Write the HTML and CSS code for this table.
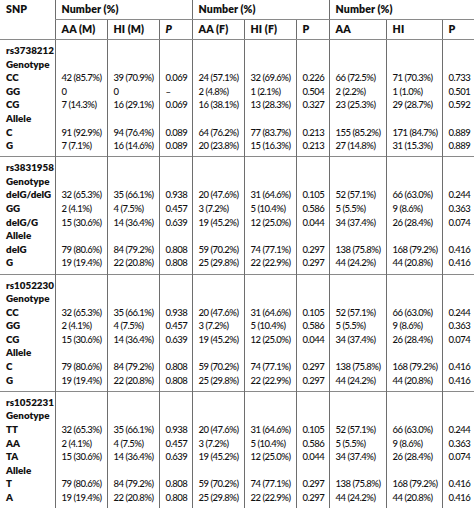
FILE: index.html
```html
<!DOCTYPE html>
<html>
<head>
<meta charset="utf-8">
<link rel="stylesheet" href="styles.css">
</head>
<body>
<table class="snp-table">
  <colgroup>
    <col class="c-snp"><col class="c-52"><col class="c-52"><col class="c-p"><col class="c-52"><col class="c-52"><col class="c-p"><col class="c-57"><col class="c-56"><col class="c-p2">
  </colgroup>
  <thead>
    <tr class="h1">
      <th rowspan="2" class="snp">SNP</th>
      <th colspan="3" class="grp">Number (%)</th>
      <th colspan="3" class="grp">Number (%)</th>
      <th colspan="3" class="grp">Number (%)</th>
    </tr>
    <tr class="h2">
      <th>AA (M)</th><th>HI (M)</th><th><i>P</i></th>
      <th>AA (F)</th><th>HI (F)</th><th>P</th>
      <th>AA</th><th>HI</th><th>P</th>
    </tr>
  </thead>
  <tbody class="sec">
    <tr class="first"><td class="lbl">rs3738212</td><td></td><td></td><td></td><td></td><td></td><td></td><td></td><td></td><td></td></tr>
    <tr><td class="lbl">Genotype</td><td></td><td></td><td></td><td></td><td></td><td></td><td></td><td></td><td></td></tr>
    <tr><td class="lbl">CC</td><td>42 (85.7%)</td><td>39 (70.9%)</td><td>0.069</td><td>24 (57.1%)</td><td>32 (69.6%)</td><td>0.226</td><td>66 (72.5%)</td><td>71 (70.3%)</td><td>0.733</td></tr>
    <tr><td class="lbl">GG</td><td>0</td><td>0</td><td>–</td><td>2 (4.8%)</td><td>1 (2.1%)</td><td>0.504</td><td>2 (2.2%)</td><td>1 (1.0%)</td><td>0.501</td></tr>
    <tr><td class="lbl">CG</td><td>7 (14.3%)</td><td>16 (29.1%)</td><td>0.069</td><td>16 (38.1%)</td><td>13 (28.3%)</td><td>0.327</td><td>23 (25.3%)</td><td>29 (28.7%)</td><td>0.592</td></tr>
    <tr><td class="lbl">Allele</td><td></td><td></td><td></td><td></td><td></td><td></td><td></td><td></td><td></td></tr>
    <tr><td class="lbl">C</td><td>91 (92.9%)</td><td>94 (76.4%)</td><td>0.089</td><td>64 (76.2%)</td><td>77 (83.7%)</td><td>0.213</td><td>155 (85.2%)</td><td>171 (84.7%)</td><td>0.889</td></tr>
    <tr class="last"><td class="lbl">G</td><td>7 (7.1%)</td><td>16 (14.6%)</td><td>0.089</td><td>20 (23.8%)</td><td>15 (16.3%)</td><td>0.213</td><td>27 (14.8%)</td><td>31 (15.3%)</td><td>0.889</td></tr>
  </tbody>
  <tbody class="sec">
    <tr class="first"><td class="lbl">rs3831958</td><td></td><td></td><td></td><td></td><td></td><td></td><td></td><td></td><td></td></tr>
    <tr><td class="lbl">Genotype</td><td></td><td></td><td></td><td></td><td></td><td></td><td></td><td></td><td></td></tr>
    <tr><td class="lbl">delG/delG</td><td>32 (65.3%)</td><td>35 (66.1%)</td><td>0.938</td><td>20 (47.6%)</td><td>31 (64.6%)</td><td>0.105</td><td>52 (57.1%)</td><td>66 (63.0%)</td><td>0.244</td></tr>
    <tr><td class="lbl">GG</td><td>2 (4.1%)</td><td>4 (7.5%)</td><td>0.457</td><td>3 (7.2%)</td><td>5 (10.4%)</td><td>0.586</td><td>5 (5.5%)</td><td>9 (8.6%)</td><td>0.363</td></tr>
    <tr><td class="lbl">delG/G</td><td>15 (30.6%)</td><td>14 (36.4%)</td><td>0.639</td><td>19 (45.2%)</td><td>12 (25.0%)</td><td>0.044</td><td>34 (37.4%)</td><td>26 (28.4%)</td><td>0.074</td></tr>
    <tr><td class="lbl">Allele</td><td></td><td></td><td></td><td></td><td></td><td></td><td></td><td></td><td></td></tr>
    <tr><td class="lbl">delG</td><td>79 (80.6%)</td><td>84 (79.2%)</td><td>0.808</td><td>59 (70.2%)</td><td>74 (77.1%)</td><td>0.297</td><td>138 (75.8%)</td><td>168 (79.2%)</td><td>0.416</td></tr>
    <tr class="last"><td class="lbl">G</td><td>19 (19.4%)</td><td>22 (20.8%)</td><td>0.808</td><td>25 (29.8%)</td><td>22 (22.9%)</td><td>0.297</td><td>44 (24.2%)</td><td>44 (20.8%)</td><td>0.416</td></tr>
  </tbody>
  <tbody class="sec">
    <tr class="first"><td class="lbl">rs1052230</td><td></td><td></td><td></td><td></td><td></td><td></td><td></td><td></td><td></td></tr>
    <tr><td class="lbl">Genotype</td><td></td><td></td><td></td><td></td><td></td><td></td><td></td><td></td><td></td></tr>
    <tr><td class="lbl">CC</td><td>32 (65.3%)</td><td>35 (66.1%)</td><td>0.938</td><td>20 (47.6%)</td><td>31 (64.6%)</td><td>0.105</td><td>52 (57.1%)</td><td>66 (63.0%)</td><td>0.244</td></tr>
    <tr><td class="lbl">GG</td><td>2 (4.1%)</td><td>4 (7.5%)</td><td>0.457</td><td>3 (7.2%)</td><td>5 (10.4%)</td><td>0.586</td><td>5 (5.5%)</td><td>9 (8.6%)</td><td>0.363</td></tr>
    <tr><td class="lbl">CG</td><td>15 (30.6%)</td><td>14 (36.4%)</td><td>0.639</td><td>19 (45.2%)</td><td>12 (25.0%)</td><td>0.044</td><td>34 (37.4%)</td><td>26 (28.4%)</td><td>0.074</td></tr>
    <tr><td class="lbl">Allele</td><td></td><td></td><td></td><td></td><td></td><td></td><td></td><td></td><td></td></tr>
    <tr><td class="lbl">C</td><td>79 (80.6%)</td><td>84 (79.2%)</td><td>0.808</td><td>59 (70.2%)</td><td>74 (77.1%)</td><td>0.297</td><td>138 (75.8%)</td><td>168 (79.2%)</td><td>0.416</td></tr>
    <tr class="last"><td class="lbl">G</td><td>19 (19.4%)</td><td>22 (20.8%)</td><td>0.808</td><td>25 (29.8%)</td><td>22 (22.9%)</td><td>0.297</td><td>44 (24.2%)</td><td>44 (20.8%)</td><td>0.416</td></tr>
  </tbody>
  <tbody class="sec">
    <tr class="first"><td class="lbl">rs1052231</td><td></td><td></td><td></td><td></td><td></td><td></td><td></td><td></td><td></td></tr>
    <tr><td class="lbl">Genotype</td><td></td><td></td><td></td><td></td><td></td><td></td><td></td><td></td><td></td></tr>
    <tr><td class="lbl">TT</td><td>32 (65.3%)</td><td>35 (66.1%)</td><td>0.938</td><td>20 (47.6%)</td><td>31 (64.6%)</td><td>0.105</td><td>52 (57.1%)</td><td>66 (63.0%)</td><td>0.244</td></tr>
    <tr><td class="lbl">AA</td><td>2 (4.1%)</td><td>4 (7.5%)</td><td>0.457</td><td>3 (7.2%)</td><td>5 (10.4%)</td><td>0.586</td><td>5 (5.5%)</td><td>9 (8.6%)</td><td>0.363</td></tr>
    <tr><td class="lbl">TA</td><td>15 (30.6%)</td><td>14 (36.4%)</td><td>0.639</td><td>19 (45.2%)</td><td>12 (25.0%)</td><td>0.044</td><td>34 (37.4%)</td><td>26 (28.4%)</td><td>0.074</td></tr>
    <tr><td class="lbl">Allele</td><td></td><td></td><td></td><td></td><td></td><td></td><td></td><td></td><td></td></tr>
    <tr><td class="lbl">T</td><td>79 (80.6%)</td><td>84 (79.2%)</td><td>0.808</td><td>59 (70.2%)</td><td>74 (77.1%)</td><td>0.297</td><td>138 (75.8%)</td><td>168 (79.2%)</td><td>0.416</td></tr>
    <tr class="last"><td class="lbl">A</td><td>19 (19.4%)</td><td>22 (20.8%)</td><td>0.808</td><td>25 (29.8%)</td><td>22 (22.9%)</td><td>0.297</td><td>44 (24.2%)</td><td>44 (20.8%)</td><td>0.416</td></tr>
  </tbody>
</table>
</body>
</html>
```

FILE: styles.css
```css
html, body {
  margin: 0;
  padding: 0;
  background: #ffffff;
}

.snp-table {
  width: 474px;
  table-layout: fixed;
  border-collapse: collapse;
  font-family: Lato, "Open Sans", "Liberation Sans", sans-serif;
  font-size: 9.5px;
  font-weight: 500;
  letter-spacing: -0.5px;
  color: #111111;
}

.c-snp { width: 55px; }
.c-52 { width: 52px; }
.c-p { width: 33px; }
.c-57 { width: 57px; }
.c-56 { width: 56px; }
.c-p2 { width: 32px; }

.snp-table th,
.snp-table td {
  padding: 0 0 0 6px;
  text-align: left;
  vertical-align: middle;
  white-space: nowrap;
  overflow: hidden;
  border-left: 1px solid #6e6e6e;
}

.snp-table th {
  font-weight: 800;
  font-size: 10.6px;
  letter-spacing: 0.1px;
  height: 19px;
  line-height: 13px;
  padding-top: 3px;
  padding-bottom: 3px;
  box-sizing: border-box;
}

.snp-table th.snp {
  border-left: none;
  vertical-align: top;
  border-bottom: 1px solid #8a8a8a;
}

.snp-table tr.h1 th.grp {
  border-bottom: 1px solid #8a8a8a;
}

.snp-table tr.h2 th {
  border-bottom: 1px solid #8a8a8a;
  height: 20px;
}

.snp-table td {
  line-height: 13.6px;
  height: 13.6px;
}

.snp-table td.lbl {
  border-left: none;
  font-weight: 800;
  font-size: 9.8px;
  letter-spacing: 0;
}

.snp-table tr.first td {
  padding-top: 4px;
}

.snp-table tr.last td {
  padding-bottom: 3.5px;
}

.snp-table tbody.sec + tbody.sec tr.first td {
  border-top: 1px solid #8a8a8a;
}
```
